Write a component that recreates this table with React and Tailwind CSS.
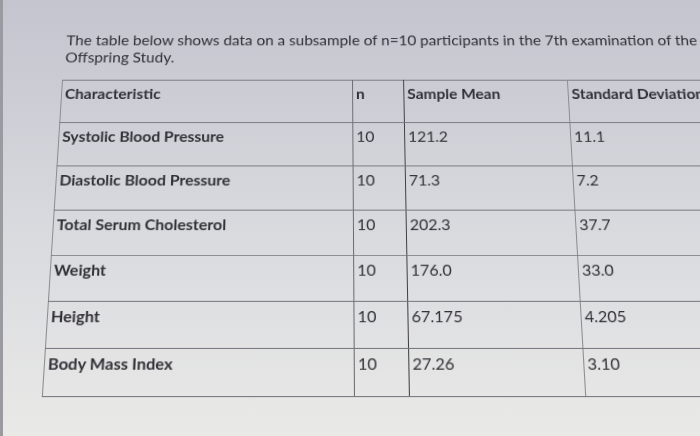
const ROWS = [
  { label: "Systolic Blood Pressure", n: "10", mean: "121.2", sd: "11.1" },
  { label: "Diastolic Blood Pressure", n: "10", mean: "71.3", sd: "7.2" },
  { label: "Total Serum Cholesterol", n: "10", mean: "202.3", sd: "37.7" },
  { label: "Weight", n: "10", mean: "176.0", sd: "33.0" },
  { label: "Height", n: "10", mean: "67.175", sd: "4.205" },
  { label: "Body Mass Index", n: "10", mean: "27.26", sd: "3.10" },
];

const cell = "h-[46px] align-top pt-[3px] pl-[3px] border-b border-[#76767c] whitespace-nowrap";

export default function App() {
  return (
    <div className="w-[700px] h-[436px] overflow-hidden bg-gradient-to-b from-[#c3c4cd] via-[#d8d9de] to-[#e9e9e7] shadow-[inset_3px_0_0_#9a9aa0] font-['Lato','Liberation_Sans',sans-serif]">
      <div className="w-full h-full pt-[17px] pl-[54px] [transform-origin:327px_237px] [transform:perspective(800px)_rotateX(10.5deg)]">
        <p className="text-[16px] leading-[19px] text-[#303036] whitespace-nowrap">
          The table below shows data on a subsample of n=10 participants in the 7th examination of the Framingham
          <br />
          Offspring Study.
        </p>

        <table className="mt-[16px] ml-[-2px] border-collapse table-fixed w-[694px] text-[16px] leading-[21px]">
          <colgroup>
            <col className="w-[301px]" />
            <col className="w-[53px]" />
            <col className="w-[170px]" />
            <col className="w-[170px]" />
          </colgroup>
          <thead>
            <tr className="border-t border-[#76767c] text-[#303036] text-left">
              <th className={`${cell} border-l border-l-[#8a8a90] font-bold`}>Characteristic</th>
              <th className={`${cell} border-l border-l-[#6a6a70] font-bold`}>n</th>
              <th className={`${cell} border-l border-l-[#3e3e44] font-bold`}>Sample Mean</th>
              <th className={`${cell} border-l border-l-[#8a8a90] font-bold`}>Standard Deviation</th>
            </tr>
          </thead>
          <tbody>
            {ROWS.map((r) => (
              <tr key={r.label} className="text-[#303036]">
                <td className={`${cell} border-l border-l-[#8a8a90] font-bold`}>{r.label}</td>
                <td className={`${cell} border-l border-l-[#6a6a70]`}>{r.n}</td>
                <td className={`${cell} border-l border-l-[#3e3e44]`}>{r.mean}</td>
                <td className={`${cell} border-l border-l-[#8a8a90]`}>{r.sd}</td>
              </tr>
            ))}
          </tbody>
        </table>
      </div>
    </div>
  );
}
